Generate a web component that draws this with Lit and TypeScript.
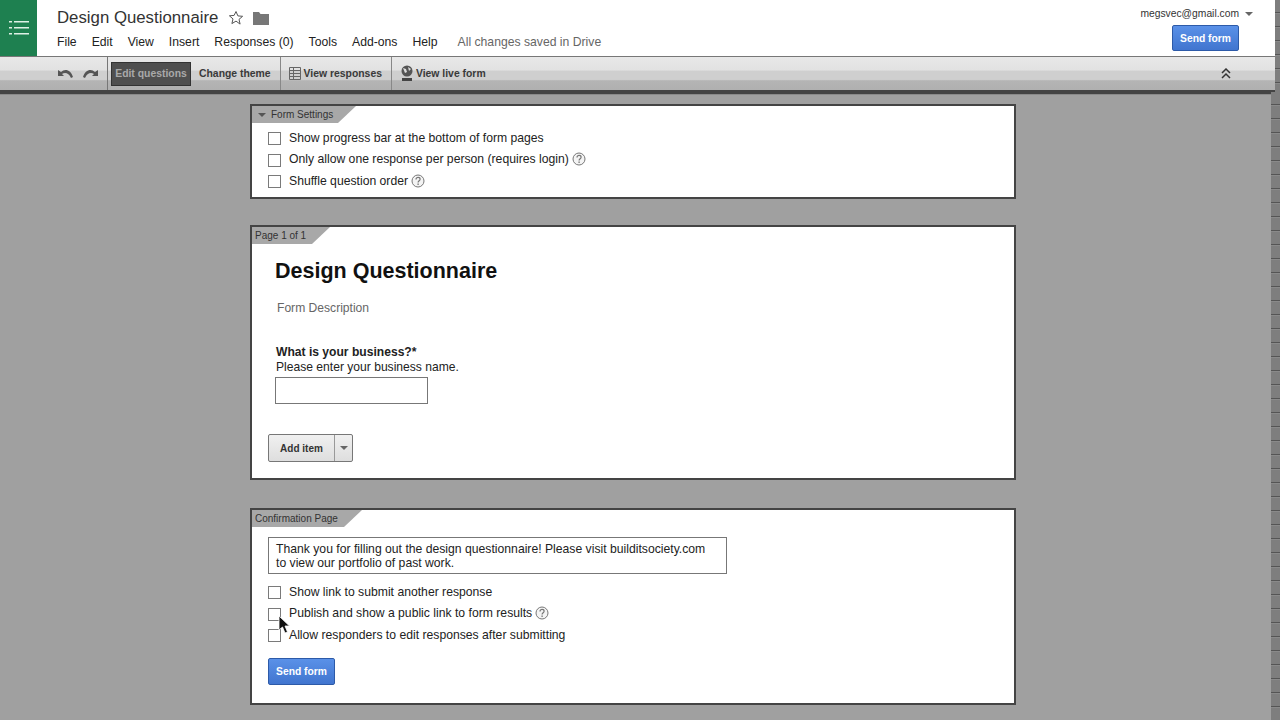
import { LitElement, css, html } from 'lit';
import { customElement } from 'lit/decorators.js';

const help = html`<svg class="help" width="14" height="14" viewBox="0 0 14 14">
  <circle cx="7" cy="7" r="6" fill="#f4f4f4" stroke="#777" stroke-width="1"></circle>
  <path d="M5 5.400c0-1.300 1-2 2.100-2s2 .8 2 1.800c0 1.500-2 1.500-2 3.200" fill="none" stroke="#777" stroke-width="1.200"></path>
  <rect x="6.400" y="9.500" width="1.400" height="1.400" fill="#777"></rect>
</svg>`;

@customElement('app-root')
export class AppRoot extends LitElement {
  static get styles() {
    return css`
:host {
  display: flex;
  flex-direction: column;
  width: 1280px;
  height: 720px;
  overflow: hidden;
  position: relative;
  background: #a0a0a0;
  font-family: "Liberation Sans", Arial, sans-serif;
  color: #222;
}
.header {
  display: flex;
  height: 56px;
  background: #fff;
  border-bottom: 1px solid #777;
  flex: none;
}
.logo {
  width: 37px;
  height: 56px;
  background: #1e8050;
  display: flex;
  align-items: center;
  justify-content: center;
}
.head-main {
  flex: 1;
  padding: 8px 0 0 20px;
}
.title-row {
  display: flex;
  align-items: center;
  height: 20px;
  color: #333;
  font-size: 16.800px;
}
.star { margin-left: 10px; }
.folder { margin-left: 9px; }
.menu {
  display: flex;
  margin-top: 7px;
  font-size: 12.200px;
  line-height: 14px;
  color: #222;
  gap: 15px;
}
.saved { color: #666; margin-left: 5px; }
.head-right {
  width: 140px;
  padding-top: 7px;
  margin-right: 27px;
  display: flex;
  flex-direction: column;
  align-items: flex-end;
  font-size: 10.300px;
  color: #333;
}
.account {
  display: flex;
  align-items: center;
  gap: 6px;
  line-height: 13px;
}
.caret {
  width: 0;
  height: 0;
  border: 4px solid transparent;
  border-top: 4px solid #666;
  border-bottom: 0;
}
.send-top {
  margin: 5px 14px 0 0;
}
.btn-blue {
  display: flex;
  align-items: center;
  justify-content: center;
  width: 67px;
  height: 26px;
  box-sizing: border-box;
  background: linear-gradient(#5a91e8, #4175cf);
  border: 1px solid #2d5aa8;
  border-radius: 2px;
  color: #fff;
  font-size: 10.300px;
  font-weight: bold;
}
.toolbar {
  display: flex;
  align-items: stretch;
  height: 33px;
  flex: none;
  background: linear-gradient(#e8e8e8 0, #e2e2e2 40%, #cfcfcf 42%, #cfcfcf 68%, #b4b4b4 72%, #b0b0b0 100%);
  border-bottom: 4px solid #444;
  box-shadow: 0 1px 0 #8a8a8a;
  font-size: 10.400px;
  font-weight: bold;
  color: #3a3a3a;
}
.tb-undo {
  width: 108px;
  box-sizing: border-box;
  padding-left: 58px;
  display: flex;
  align-items: center;
  gap: 8px;
  border-right: 1px solid #777;
}
.tb-group {
  display: flex;
  align-items: center;
  padding: 0 9px 0 8px;
  border-right: 1px solid #888;
  gap: 3px;
}
.tb-group.first { padding: 0 9px 0 3px; gap: 8px; }
.tb-group.plain { border-right: 0; gap: 2px; }
.active {
  display: flex;
  align-items: center;
  justify-content: center;
  width: 80px;
  height: 24px;
  background: #4f4f4f;
  color: #a9a9a9;
  border: 1px solid #333;
  box-sizing: border-box;
}
.tb-spacer { flex: 1; }
.collapse {
  margin-right: 49px;
  display: flex;
  align-items: center;
}
.content {
  display: flex;
  flex-direction: column;
  padding: 10px 0 0 250px;
  gap: 26px;
}
.card {
  width: 766px;
  box-sizing: border-box;
  background: #fff;
  border: 2px solid #444;
  flex: none;
}
.tab {
  display: flex;
  align-items: center;
  height: 17px;
  box-sizing: border-box;
  padding-left: 3px;
  background: #a8a8a8;
  font-size: 10px;
  color: #333;
  clip-path: polygon(0 0, 100% 0, calc(100% - 18px) 100%, 0 100%);
}
.tab-settings { width: 104px; padding-left: 5px; }
.tab-page { width: 78px; }
.tab-confirm { width: 110px; }
.tri {
  width: 0;
  height: 0;
  border: 4px solid transparent;
  border-top: 4px solid #555;
  border-bottom: 0;
  margin: 0 5px 0 1px;
}
.checks {
  display: flex;
  flex-direction: column;
  padding-left: 16px;
}
.check {
  display: flex;
  align-items: center;
  height: 21.500px;
  font-size: 12.200px;
  color: #222;
}
.box {
  width: 11px;
  height: 11px;
  border: 1px solid #7a7a7a;
  background: #fff;
  margin: 2px 8px 0 0;
  flex: none;
}
.help { margin-left: 3px; flex: none; }
.settings { height: 95px; }
.settings .checks { padding-top: 4px; }
.page { height: 255px; }
.form-body { padding: 15px 0 0 23px; }
.form-title {
  font-size: 21.500px;
  font-weight: bold;
  color: #111;
  line-height: 24px;
}
.form-desc {
  margin: 18px 0 0 2px;
  font-size: 12.100px;
  line-height: 14px;
  color: #666;
}
.q-title {
  margin: 30px 0 0 1px;
  font-size: 12.100px;
  font-weight: bold;
  line-height: 15px;
  color: #222;
}
.q-help {
  margin-left: 1px;
  font-size: 12.100px;
  line-height: 15px;
  color: #222;
}
.q-input {
  width: 153px;
  height: 27px;
  box-sizing: border-box;
  margin-top: 2px;
  border: 1px solid #777;
}
.add-item {
  display: flex;
  width: 85px;
  height: 28px;
  box-sizing: border-box;
  margin: 30px 0 0 -7px;
  background: linear-gradient(#f0f0f0, #dedede);
  border: 1px solid #777;
  border-radius: 2px;
  font-size: 10px;
  font-weight: bold;
  color: #333;
}
.add-label {
  flex: 1;
  display: flex;
  align-items: center;
  justify-content: center;
  border-right: 1px solid #999;
}
.add-caret {
  width: 17px;
  display: flex;
  align-items: center;
  justify-content: center;
}
.confirm { height: 197px; margin-top: 2px; }
.confirm-body { padding: 10px 0 0 16px; }
.confirm-text {
  width: 459px;
  height: 37px;
  box-sizing: border-box;
  border: 1px solid #777;
  padding: 4px 11px 4px 7px;
  font-size: 12.200px;
  line-height: 14px;
  color: #222;
}
.confirm .checks { padding: 7px 0 0 0; }
.send-bottom { margin-top: 12px; height: 27px; }
.cursor { position: absolute; left: 278px; top: 615px; }
.edge {
  position: absolute;
  right: 0;
  background: repeating-linear-gradient(#7e7e7e 0 12px, #555 12px 13px, #8a8a8a 13px 14px);
}
.edge-top { top: 0; width: 5px; height: 92px; }
.edge-main { top: 92px; bottom: 0; width: 9px; }
    `;
  }

  render() {
    return html`
      <div class="header">
        <div class="logo">
          <svg width="20" height="14" viewBox="0 0 20 14" fill="#dff0e6">
            <rect x="0" y="0" width="3" height="1.500"></rect><rect x="5" y="0" width="15" height="1.500"></rect>
            <rect x="0" y="6" width="3" height="1.500"></rect><rect x="5" y="6" width="15" height="1.500"></rect>
            <rect x="0" y="12" width="3" height="1.500"></rect><rect x="5" y="12" width="15" height="1.500"></rect>
          </svg>
        </div>
        <div class="head-main">
          <div class="title-row">
            <span>Design Questionnaire</span>
            <svg class="star" width="16" height="16" viewBox="0 0 16 16"><path d="M8 1.500l1.900 4.400 4.700.4-3.600 3.100 1.100 4.700L8 11.100l-4.100 2.500 1.100-4.700-3.600-3.100 4.700-.4z" fill="none" stroke="#555" stroke-width="1"></path></svg>
            <svg class="folder" width="16" height="14" viewBox="0 0 16 14"><path d="M0 1h6l1.500 2H16v11H0z" fill="#777"></path></svg>
          </div>
          <div class="menu">
            <span>File</span><span>Edit</span><span>View</span><span>Insert</span><span>Responses (0)</span><span>Tools</span><span>Add-ons</span><span>Help</span>
            <span class="saved">All changes saved in Drive</span>
          </div>
        </div>
        <div class="head-right">
          <div class="account">megsvec@gmail.com <span class="caret"></span></div>
          <div class="btn-blue send-top">Send form</div>
        </div>
      </div>
      <div class="toolbar">
        <div class="tb-undo">
          <svg width="16" height="10" viewBox="0 0 16 10"><path d="M0 1v6h6L4 5c3-2 7-1 9 4l2-1C13 1 7-1 3 3z" fill="#555"></path></svg>
          <svg width="16" height="10" viewBox="0 0 16 10"><path d="M16 1v6h-6l2-2C9 3 5 4 3 9L1 8C3 1 9-1 13 3z" fill="#555"></path></svg>
        </div>
        <div class="tb-group first"><span class="active">Edit questions</span><span>Change theme</span></div>
        <div class="tb-group">
          <svg width="12" height="13" viewBox="0 0 12 13" fill="none" stroke="#666"><path d="M.5.500h11v12H.5zM.5 3.500h11M4.500 .5v12M.5 6.500h11M.5 9.500h11"></path></svg>
          <span>View responses</span>
        </div>
        <div class="tb-group plain">
          <svg width="14" height="17" viewBox="0 0 14 17"><circle cx="7" cy="6" r="5.500" fill="#555"></circle><path d="M3 3l3 1 1 3-2 1zM8 2l3 2-2 2z" fill="#ddd"></path><rect x="2" y="13" width="10" height="3" fill="#444"></rect></svg>
          <span>View live form</span>
        </div>
        <div class="tb-spacer"></div>
        <div class="collapse">
          <svg width="10" height="11" viewBox="0 0 10 11" fill="none" stroke="#333" stroke-width="1.500"><path d="M1 5l4-4 4 4M1 10l4-4 4 4"></path></svg>
        </div>
      </div>
      <div class="content">
        <div class="card settings">
          <div class="tab tab-settings"><span class="tri"></span>Form Settings</div>
          <div class="checks">
            <div class="check"><span class="box"></span>Show progress bar at the bottom of form pages</div>
            <div class="check"><span class="box"></span>Only allow one response per person (requires login)${help}</div>
            <div class="check"><span class="box"></span>Shuffle question order${help}</div>
          </div>
        </div>
        <div class="card page">
          <div class="tab tab-page">Page 1 of 1</div>
          <div class="form-body">
            <div class="form-title">Design Questionnaire</div>
            <div class="form-desc">Form Description</div>
            <div class="q-title">What is your business?*</div>
            <div class="q-help">Please enter your business name.</div>
            <div class="q-input"></div>
            <div class="add-item">
              <span class="add-label">Add item</span>
              <span class="add-caret"><span class="caret"></span></span>
            </div>
          </div>
        </div>
        <div class="card confirm">
          <div class="tab tab-confirm">Confirmation Page</div>
          <div class="confirm-body">
            <div class="confirm-text">Thank you for filling out the design questionnaire! Please visit builditsociety.com to view our portfolio of past work.</div>
            <div class="checks">
              <div class="check"><span class="box"></span>Show link to submit another response</div>
              <div class="check"><span class="box"></span>Publish and show a public link to form results${help}</div>
              <div class="check"><span class="box"></span>Allow responders to edit responses after submitting</div>
            </div>
            <div class="btn-blue send-bottom">Send form</div>
          </div>
        </div>
      </div>
      <div class="edge edge-top"></div>
      <div class="edge edge-main"></div>
      <svg class="cursor" width="12" height="19" viewBox="0 0 12 19"><path d="M1 1v14l3.500-3 2.500 6 2.500-1-2.500-6h4.500z" fill="#111" stroke="#fff" stroke-width=".8"></path></svg>
    `;
  }
}
